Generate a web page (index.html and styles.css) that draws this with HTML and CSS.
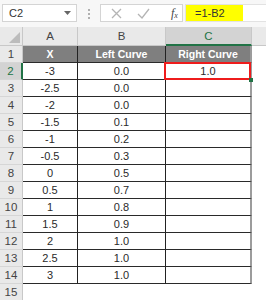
FILE: index.html
```html
<!DOCTYPE html>
<html>
<head>
<meta charset="utf-8">
<link rel="stylesheet" href="styles.css">
</head>
<body>
<div class="bar">
  <div class="namebox"><span>C2</span><svg class="dd" width="7" height="4" viewBox="0 0 7 4"><path d="M0 0H7L3.5 4Z" fill="#666"/></svg></div>
  <div class="dots"><i></i><i></i><i></i></div>
  <div class="btns">
    <svg width="11" height="11" viewBox="0 0 11 11"><path d="M1 1L10 10M10 1L1 10" stroke="#b4b4b4" stroke-width="1.3"/></svg>
    <svg width="13" height="11" viewBox="0 0 13 11"><path d="M1 6L5 10L12 1" stroke="#b4b4b4" stroke-width="1.3" fill="none"/></svg>
    <span class="fx">f<sub>x</sub></span>
  </div>
  <div class="input"><span class="hl">=1-B2</span></div>
</div>
<div class="sheet">
  <div class="hd corner"><i></i></div><div class="hd">A</div><div class="hd">B</div><div class="hd sel">C</div><div class="hd last"></div>

  <div class="rh">1</div><div class="th">X</div><div class="th">Left Curve</div><div class="th c">Right Curve</div><div class="d"></div>
  <div class="rh sel">2</div><div class="td">-3</div><div class="td">0.0</div><div class="td c active">1.0</div><div class="d"></div>
  <div class="rh">3</div><div class="td">-2.5</div><div class="td">0.0</div><div class="td c"></div><div class="d"></div>
  <div class="rh">4</div><div class="td">-2</div><div class="td">0.0</div><div class="td c"></div><div class="d"></div>
  <div class="rh">5</div><div class="td">-1.5</div><div class="td">0.1</div><div class="td c"></div><div class="d"></div>
  <div class="rh">6</div><div class="td">-1</div><div class="td">0.2</div><div class="td c"></div><div class="d"></div>
  <div class="rh">7</div><div class="td">-0.5</div><div class="td">0.3</div><div class="td c"></div><div class="d"></div>
  <div class="rh">8</div><div class="td">0</div><div class="td">0.5</div><div class="td c"></div><div class="d"></div>
  <div class="rh">9</div><div class="td">0.5</div><div class="td">0.7</div><div class="td c"></div><div class="d"></div>
  <div class="rh">10</div><div class="td">1</div><div class="td">0.8</div><div class="td c"></div><div class="d"></div>
  <div class="rh">11</div><div class="td">1.5</div><div class="td">0.9</div><div class="td c"></div><div class="d"></div>
  <div class="rh">12</div><div class="td">2</div><div class="td">1.0</div><div class="td c"></div><div class="d"></div>
  <div class="rh">13</div><div class="td">2.5</div><div class="td">1.0</div><div class="td c"></div><div class="d"></div>
  <div class="rh">14</div><div class="td">3</div><div class="td">1.0</div><div class="td c"></div><div class="d"></div>
  <div class="rh">15</div><div class="e"></div><div class="e"></div><div class="e"></div><div class="e"></div>
</div>
</body>
</html>
```
FILE: styles.css
```css
* { box-sizing: border-box; }
html, body { margin: 0; padding: 0; background: #fff; overflow: hidden; }
body { width: 266px; height: 300px; font-family: "Liberation Sans", Arial, sans-serif; font-size: 11px; color: #2a2a2a; }

.bar { height: 27px; background: #f7f7f7; display: flex; align-items: flex-start; padding-top: 4px; }
.namebox { margin-left: 2px; width: 75px; height: 18px; background: #fff; border: 1px solid #d4d4d4; display: flex; align-items: center; justify-content: space-between; padding: 0 5px 0 6px; color: #333; }
.dots { width: 23px; display: flex; flex-direction: column; align-items: center; gap: 2px; padding-top: 5px; }
.dots i { width: 2px; height: 2px; background: #b0b0b0; }
.btns { width: 83px; height: 18px; background: #fff; border: 1px solid #d4d4d4; display: flex; align-items: center; padding-left: 10px; gap: 15px; }
.fx { font-family: "Liberation Serif", serif; font-style: italic; font-size: 12px; color: #444; margin-left: 6px; }
.fx sub { font-size: 8px; vertical-align: -1px; }
.input { flex: 1; margin-left: 2px; height: 18px; background: #fff; border: 1px solid #e2e2e2; border-right: none; }
.hl { display: block; width: 57px; height: 16px; background: #ffff00; padding-left: 9px; line-height: 16px; color: #333; }

.sheet { display: grid; grid-template-columns: 23px 55px 88px 86px 14px; grid-template-rows: 19px repeat(15, 17px); }
.sheet > div { display: flex; align-items: center; justify-content: center; white-space: nowrap; }

.hd { background: #e9e9e9; border-right: 1px solid #c8c8c8; border-bottom: 1px solid #c8c8c8; color: #444; font-size: 11.5px; }
.hd.sel { background: #d3d3d3; color: #217346; border-bottom: 2px solid #217346; }
.hd.last { border-right: none; }
.corner { position: relative; }
.corner i { position: absolute; right: 2px; bottom: 2px; width: 0; height: 0; border-left: 11px solid transparent; border-bottom: 11px solid #bcbcbc; }

.rh { background: #e9e9e9; border-right: 1px solid #c8c8c8; border-bottom: 1px solid #d6d6d6; color: #444; font-size: 11.5px; }
.rh.sel { background: #d3d3d3; color: #217346; border-right: 2px solid #217346; }

.th { background: #7f7f7f; color: #fff; font-weight: bold; font-size: 10.5px; border-right: 1px solid #222; border-bottom: 1px solid #2a2a2a; }
.td { background: #fff; border-right: 1px solid #222; border-bottom: 1px solid #2a2a2a; }
.th.c, .td.c { border-right: 2px solid #9c9c9c; }
.td.active { position: relative; }
.td.active::after { content: ""; position: absolute; left: -2px; top: -1px; right: -1px; bottom: -1px; border: 2px solid #ee1c1c; }
.td.active::before { content: ""; position: absolute; right: -3px; bottom: -3px; width: 4px; height: 4px; background: #217346; z-index: 2; }
.d, .e { background: #fff; }
```
